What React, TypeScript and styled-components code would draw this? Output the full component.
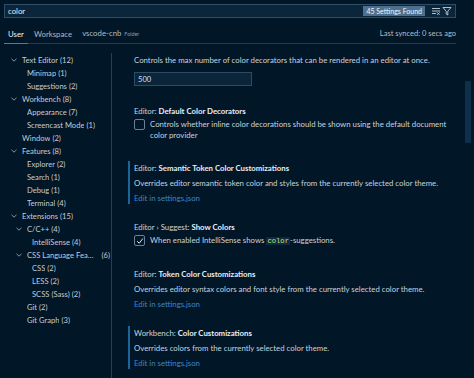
import React from 'react';
import styled, { createGlobalStyle } from 'styled-components';

const GlobalStyle = createGlobalStyle`
    html, body {
        margin: 0;
        padding: 0;
        background: #011627;
    }
    body {
        font-family: Lato, 'Noto Sans', sans-serif;
        color: #d6deeb;
    }
`;

const Page = styled.div`
    width: 474px;
    height: 378px;
    overflow: hidden;
    display: flex;
    flex-direction: column;
    background: #011627;
`;

const Header = styled.div`
    padding: 4px 18px 0 4px;
`;

const SearchBox = styled.div`
    height: 14px;
    box-sizing: border-box;
    border: 1px solid #2e4d68;
    background: #0b253a;
    display: flex;
    align-items: center;
    padding: 0 3px 0 3px;
`;

const SearchText = styled.span`
    flex: 1;
    font-size: 7.8px;
    color: #e4ebf5;
`;

const Badge = styled.span`
    background: #4f6f8c;
    color: #f2f6fa;
    font-size: 7px;
    line-height: 10px;
    padding: 0 3px;
    margin-right: 5px;
`;

const IconButton = styled.span`
    display: flex;
    width: 10px;
    height: 10px;
    margin-left: 1px;
    color: #c5cfdb;
`;

const TabsRow = styled.div`
    height: 25px;
    border-bottom: 1px solid #24394d;
    display: flex;
    align-items: flex-end;
`;

const Tab = styled.div<{ $active?: boolean }>`
    display: flex;
    align-items: baseline;
    gap: 3px;
    padding: 0 4px 4px 4px;
    margin: 0 2px -1px 0;
    font-size: 7.8px;
    line-height: 12px;
    color: ${(p) => (p.$active ? '#eef3f9' : '#aebbc8')};
    box-shadow: ${(p) => (p.$active ? 'inset 0 -1px 0 #5a7690' : 'none')};
`;

const FolderTag = styled.span`
    font-size: 5.4px;
    color: #8c9aa8;
`;

const Synced = styled.div`
    margin-left: auto;
    font-size: 7.5px;
    line-height: 12px;
    padding-bottom: 3px;
    color: #b3bfcb;
`;

const Body = styled.div`
    flex: 1;
    display: flex;
    margin-top: 9px;
    min-height: 0;
`;

const Toc = styled.div`
    width: 111px;
    border-right: 1px solid #283d50;
    display: flex;
    flex-direction: column;
`;

const TocRow = styled.div<{ $level: number }>`
    display: flex;
    align-items: center;
    height: 13px;
    padding-left: ${(p) => p.$level * 5 + 6}px;
    padding-right: 1px;
    font-size: 7.6px;
    color: #c3cdd9;
    white-space: nowrap;
`;

const Chevron = styled.span`
    width: 11px;
    flex: none;
    display: flex;
    align-items: center;
    color: #aab6c2;
`;

const TocLabel = styled.span`
    overflow: hidden;
    text-overflow: ellipsis;
    min-width: 0;
`;

const TocCount = styled.span<{ $gap: number }>`
    flex: none;
    margin-left: ${(p) => p.$gap}px;
`;

const Content = styled.div`
    position: relative;
    flex: 1;
    padding: 0 18px 0 16px;
    display: flex;
    flex-direction: column;
    gap: 16px;
`;

const Item = styled.div<{ $marked?: boolean }>`
    padding: 1px 0 0 4px;
    border-left: 2px solid ${(p) => (p.$marked ? '#1d6497' : 'transparent')};
`;

const Title = styled.div`
    font-size: 7.8px;
    line-height: 12px;
    color: #d9e1ec;
`;

const Category = styled.span`
    opacity: 0.92;
`;

const Label = styled.span`
    font-weight: 700;
    color: #e8eef6;
`;

const Description = styled.div<{ $first?: boolean }>`
    margin-top: ${(p) => (p.$first ? 0 : 3)}px;
    font-size: 7.8px;
    line-height: 12px;
    color: #c9d3de;
    white-space: nowrap;
`;

const Link = styled.div`
    margin-top: 3px;
    font-size: 7.8px;
    line-height: 12px;
    color: #3f86c8;
`;

const NumberInput = styled.div`
    margin: 6px 0 2px 0;
    width: 118px;
    height: 14px;
    box-sizing: border-box;
    border: 1px solid #2c4b66;
    background: #0b253a;
    font-size: 7.6px;
    line-height: 12px;
    padding-left: 3px;
    color: #d6deeb;
`;

const CheckRow = styled.div`
    display: flex;
    gap: 5px;
    margin: 2px 0 4px 0;
`;

const Box = styled.span`
    flex: none;
    width: 11px;
    height: 11px;
    box-sizing: border-box;
    border: 1px solid #6a8198;
    border-radius: 2px;
    background: #011627;
    display: flex;
    align-items: center;
    justify-content: center;
    color: #e4ebf5;
`;

const CheckText = styled.div`
    font-size: 7.8px;
    line-height: 11px;
    color: #c9d3de;
`;

const Code = styled.code`
    font-family: 'Liberation Mono', monospace;
    font-size: 7.2px;
    color: #c5e478;
    background: #0d2a40;
    padding: 0 1px;
`;

const Slider = styled.div`
    position: absolute;
    right: 3px;
    top: 28px;
    width: 6px;
    height: 62px;
    background: #0f304c;
`;

const ClearAllIcon = () => (
    <svg width="10" height="10" viewBox="0 0 10 10" fill="none" stroke="currentColor" strokeWidth="0.9">
        <path d="M1 2.5h8M1 5h8M1 7.5h4" />
        <path d="M6.2 6.4l2.4 2.4M8.6 6.4L6.2 8.8" />
    </svg>
);

const FilterIcon = () => (
    <svg width="10" height="10" viewBox="0 0 10 10" fill="none" stroke="currentColor" strokeWidth="0.9">
        <path d="M1 1.5h8L5.8 5.2V9L4.2 8V5.2z" strokeLinejoin="round" />
    </svg>
);

const ChevronDown = () => (
    <svg width="6" height="4" viewBox="0 0 6 4" fill="none" stroke="currentColor" strokeWidth="0.8">
        <path d="M0.5 0.8L3 3.2L5.5 0.8" />
    </svg>
);

const CheckMark = () => (
    <svg width="8" height="8" viewBox="0 0 8 8" fill="none" stroke="currentColor" strokeWidth="1">
        <path d="M1.2 4.2L3.2 6.2L6.9 1.5" />
    </svg>
);

interface ITocEntry {
    label: string;
    count: number;
    level: number;
    open?: boolean;
    clipped?: boolean;
}

const toc: ITocEntry[] = [
    { label: 'Text Editor', count: 12, level: 1, open: true },
    { label: 'Minimap', count: 1, level: 2 },
    { label: 'Suggestions', count: 2, level: 2 },
    { label: 'Workbench', count: 8, level: 1, open: true },
    { label: 'Appearance', count: 7, level: 2 },
    { label: 'Screencast Mode', count: 1, level: 2 },
    { label: 'Window', count: 2, level: 1 },
    { label: 'Features', count: 8, level: 1, open: true },
    { label: 'Explorer', count: 2, level: 2 },
    { label: 'Search', count: 1, level: 2 },
    { label: 'Debug', count: 1, level: 2 },
    { label: 'Terminal', count: 4, level: 2 },
    { label: 'Extensions', count: 15, level: 1, open: true },
    { label: 'C/C++', count: 4, level: 2, open: true },
    { label: 'IntelliSense', count: 4, level: 3 },
    { label: 'CSS Language Feat...', count: 6, level: 2, open: true, clipped: true },
    { label: 'CSS', count: 2, level: 3 },
    { label: 'LESS', count: 2, level: 3 },
    { label: 'SCSS (Sass)', count: 2, level: 3 },
    { label: 'Git', count: 2, level: 2 },
    { label: 'Git Graph', count: 3, level: 2 },
];

const App: React.FC = () => {
    return (
        <Page>
            <GlobalStyle />
            <Header>
                <SearchBox>
                    <SearchText>color</SearchText>
                    <Badge>45 Settings Found</Badge>
                    <IconButton>
                        <ClearAllIcon />
                    </IconButton>
                    <IconButton>
                        <FilterIcon />
                    </IconButton>
                </SearchBox>
                <TabsRow>
                    <Tab $active>User</Tab>
                    <Tab>Workspace</Tab>
                    <Tab>
                        vscode-cnb <FolderTag>Folder</FolderTag>
                    </Tab>
                    <Synced>Last synced: 0 secs ago</Synced>
                </TabsRow>
            </Header>
            <Body>
                <Toc>
                    {toc.map((entry) => (
                        <TocRow key={entry.label} $level={entry.level}>
                            <Chevron>{entry.open && <ChevronDown />}</Chevron>
                            <TocLabel>{entry.label}</TocLabel>
                            <TocCount $gap={entry.clipped ? 6 : 2}>({entry.count})</TocCount>
                        </TocRow>
                    ))}
                </Toc>
                <Content>
                    <Item>
                        <Description $first>
                            Controls the max number of color decorators that can be rendered in an editor at once.
                        </Description>
                        <NumberInput>500</NumberInput>
                    </Item>
                    <Item>
                        <Title>
                            <Category>Editor: </Category>
                            <Label>Default Color Decorators</Label>
                        </Title>
                        <CheckRow>
                            <Box />
                            <CheckText>
                                Controls whether inline color decorations should be shown using the default document
                                <br />
                                color provider
                            </CheckText>
                        </CheckRow>
                    </Item>
                    <Item $marked>
                        <Title>
                            <Category>Editor: </Category>
                            <Label>Semantic Token Color Customizations</Label>
                        </Title>
                        <Description>
                            Overrides editor semantic token color and styles from the currently selected color theme.
                        </Description>
                        <Link>Edit in settings.json</Link>
                    </Item>
                    <Item>
                        <Title>
                            <Category>Editor › Suggest: </Category>
                            <Label>Show Colors</Label>
                        </Title>
                        <CheckRow>
                            <Box>
                                <CheckMark />
                            </Box>
                            <CheckText>
                                When enabled IntelliSense shows <Code>color</Code>-suggestions.
                            </CheckText>
                        </CheckRow>
                    </Item>
                    <Item>
                        <Title>
                            <Category>Editor: </Category>
                            <Label>Token Color Customizations</Label>
                        </Title>
                        <Description>
                            Overrides editor syntax colors and font style from the currently selected color theme.
                        </Description>
                        <Link>Edit in settings.json</Link>
                    </Item>
                    <Item $marked>
                        <Title>
                            <Category>Workbench: </Category>
                            <Label>Color Customizations</Label>
                        </Title>
                        <Description>Overrides colors from the currently selected color theme.</Description>
                        <Link>Edit in settings.json</Link>
                    </Item>
                    <Slider />
                </Content>
            </Body>
        </Page>
    );
};

export default App;
